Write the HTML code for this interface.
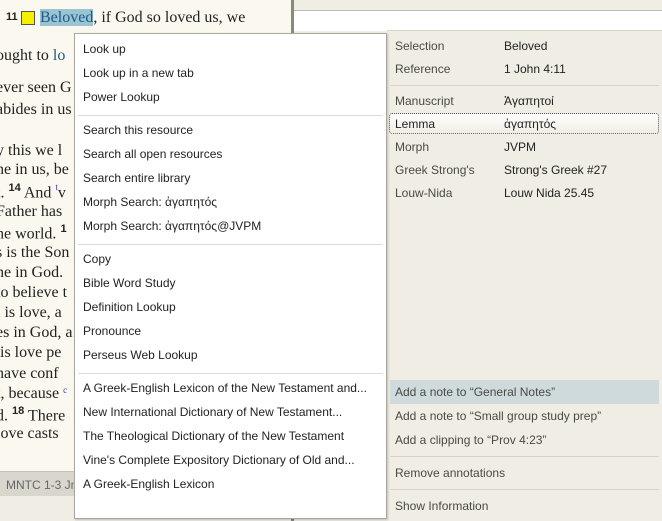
<!DOCTYPE html>
<html><head><meta charset="utf-8"><style>
*{margin:0;padding:0;box-sizing:border-box}
body{width:662px;height:521px;overflow:hidden;position:relative;background:#efede4;font-family:"Liberation Sans",sans-serif}
#left{position:absolute;left:0;top:0;width:291px;height:471px;background:#fbf8ef;overflow:hidden}
#left div{position:absolute;font-family:"Liberation Serif",serif;font-size:16px;color:#222;white-space:nowrap}
sup{font-family:"Liberation Sans",sans-serif;font-weight:bold;font-size:11px}
#tabbar{position:absolute;left:0;top:471px;width:291px;height:25px;background:#d9d7cd;border-top:1px solid #c4c2b8;font-size:12px;color:#666;padding:6px 0 0 6px}
#vline{position:absolute;left:291px;top:0;width:3px;height:521px;background:#8a887f}
#tool{position:absolute;left:294px;top:0;width:368px;height:11px;background:#efede4;border-bottom:1px solid #bcbab0}
#white{position:absolute;left:294px;top:11px;width:368px;height:20px;background:#fff}
#menu{position:absolute;left:74px;top:33px;width:313px;height:486px;background:#fff;border:1px solid #a9a79e;box-shadow:1px 1px 2px rgba(0,0,0,.2)}
.mi{position:absolute;left:8px;font-size:12px;color:#222;white-space:nowrap}
.sep{position:absolute;left:3px;right:3px;height:1px;background:#dddbd2}
#panel{position:absolute;left:387px;top:30px;width:275px;height:491px;background:#efede4;border-top:1px solid #d6d4cb}
.pl{position:absolute;left:8px;font-size:12px;color:#4a4a44;white-space:nowrap}
.pv{position:absolute;left:117px;font-size:12px;color:#222;white-space:nowrap}
.psep{position:absolute;left:3px;right:3px;height:1px;background:#d6d4ca}
</style></head><body>
<div id="left">
<div style="left:6px;top:11px;font-family:'Liberation Sans',sans-serif!important;font-weight:bold;font-size:11px!important">11</div>
<div style="left:21px;top:11px;width:14px;height:14px;background:#f5f000;border:1px solid #555"></div>
<div style="left:40px;top:9px"><span style="background:#9ac4d2;color:#1d5a8a">Beloved</span>, if God so loved us, we</div>
<div style="left:-4px;top:47px">ought to <span style="color:#1d5a8a">lo</span></div>
<div style="left:-4px;top:79px">ever seen G</div>
<div style="left:-4px;top:101px">abides in us</div>
<div style="left:-4px;top:142px">y this we l</div>
<div style="left:-4px;top:161px">he in us, be</div>
<div style="left:-4px;top:182px">t. <sup>14</sup> And <span style="color:#33c;font-size:9px;vertical-align:top">t</span>v</div>
<div style="left:-4px;top:203px">Father has</div>
<div style="left:-4px;top:223px">he world. <sup>1</sup></div>
<div style="left:-4px;top:244px">s is the Son</div>
<div style="left:-4px;top:264px">he in God. </div>
<div style="left:-4px;top:284px">to believe t</div>
<div style="left:-4px;top:304px">l is love, a</div>
<div style="left:-4px;top:324px">es in God, a</div>
<div style="left:-4px;top:344px"><span style="color:#33c;font-size:9px;vertical-align:top">a</span>is love pe</div>
<div style="left:-4px;top:365px"> have conf</div>
<div style="left:-4px;top:385px">t, because <span style="color:#33c;font-size:9px;vertical-align:top">c</span></div>
<div style="left:-4px;top:405px">d. <sup>18</sup> There</div>
<div style="left:-4px;top:425px">love casts </div>
</div>
<div id="tabbar">MNTC 1-3 Jn</div>
<div id="vline"></div>
<div id="tool"></div>
<div id="white"></div>
<div id="panel">
<div class="pl" style="top:8px">Selection</div><div class="pv" style="top:8px">Beloved</div>
<div class="pl" style="top:31px">Reference</div><div class="pv" style="top:31px">1 John 4:11</div>
<div class="psep" style="top:54px"></div>
<div class="pl" style="top:63px">Manuscript</div><div class="pv" style="top:63px">Ἀγαπητοί</div>
<div style="position:absolute;left:2px;top:82px;width:270px;height:21px;border:1px dotted #555;border-radius:3px;background:linear-gradient(#fff,#efede4)"></div>
<div class="pl" style="top:86px;color:#222">Lemma</div><div class="pv" style="top:86px">ἀγαπητός</div>
<div class="pl" style="top:109px">Morph</div><div class="pv" style="top:109px">JVPM</div>
<div class="pl" style="top:132px">Greek Strong's</div><div class="pv" style="top:132px">Strong's Greek #27</div>
<div class="pl" style="top:155px">Louw-Nida</div><div class="pv" style="top:155px">Louw Nida 25.45</div>
<div style="position:absolute;left:3px;top:349px;width:269px;height:24px;background:#cfdadd"></div>
<div class="pl" style="top:354px">Add a note to “General Notes”</div>
<div class="pl" style="top:378px">Add a note to “Small group study prep”</div>
<div class="pl" style="top:402px">Add a clipping to “Prov 4:23”</div>
<div class="psep" style="top:425px"></div>
<div class="pl" style="top:435px">Remove annotations</div>
<div class="psep" style="top:458px"></div>
<div class="pl" style="top:468px">Show Information</div>
</div>
<div id="menu">
<div class="mi" style="top:8px">Look up</div>
<div class="mi" style="top:32px">Look up in a new tab</div>
<div class="mi" style="top:56px">Power Lookup</div>
<div class="sep" style="top:81px"></div>
<div class="mi" style="top:89px">Search this resource</div>
<div class="mi" style="top:113px">Search all open resources</div>
<div class="mi" style="top:137px">Search entire library</div>
<div class="mi" style="top:161px">Morph Search: ἀγαπητός</div>
<div class="mi" style="top:185px">Morph Search: ἀγαπητός@JVPM</div>
<div class="sep" style="top:210px"></div>
<div class="mi" style="top:218px">Copy</div>
<div class="mi" style="top:242px">Bible Word Study</div>
<div class="mi" style="top:266px">Definition Lookup</div>
<div class="mi" style="top:290px">Pronounce</div>
<div class="mi" style="top:314px">Perseus Web Lookup</div>
<div class="sep" style="top:339px"></div>
<div class="mi" style="top:347px">A Greek-English Lexicon of the New Testament and...</div>
<div class="mi" style="top:371px">New International Dictionary of New Testament...</div>
<div class="mi" style="top:395px">The Theological Dictionary of the New Testament</div>
<div class="mi" style="top:419px">Vine's Complete Expository Dictionary of Old and...</div>
<div class="mi" style="top:443px">A Greek-English Lexicon</div>
</div>
</body></html>
